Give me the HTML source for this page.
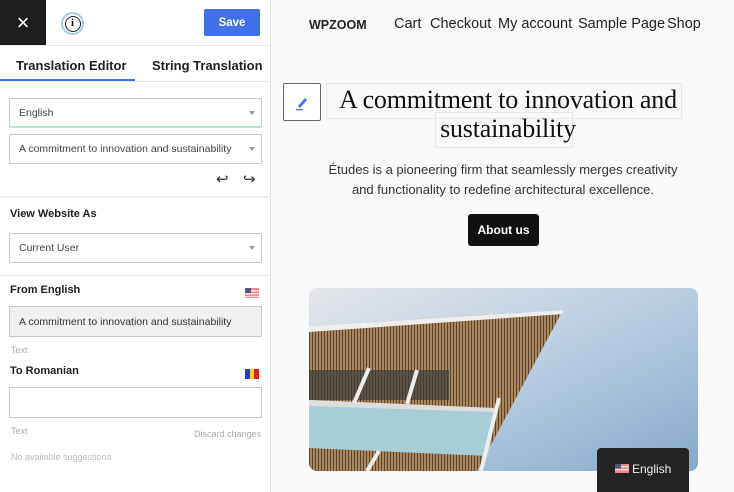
<!DOCTYPE html>
<html><head><meta charset="utf-8"><style>
*{box-sizing:border-box;margin:0;padding:0}
body{width:734px;height:492px;overflow:hidden;font-family:"Liberation Sans",Arial,sans-serif;background:#f9f9f9;position:relative}
#left{position:absolute;left:0;top:0;width:271px;height:492px;background:#fff;border-right:1px solid #e2e2e2}
.abs{position:absolute}
.sel{position:absolute;left:9px;width:253px;border:1px solid #c8c8c8;border-radius:2px;font-size:10.5px;color:#444;padding-left:9px;background:#fff}
.arr{position:absolute;right:6px;top:50%;margin-top:-2px;border-left:3px solid transparent;border-right:3px solid transparent;border-top:4px solid #999}
.lbl{position:absolute;left:10px;font-size:11px;font-weight:bold;color:#1e1e1e}
.small{position:absolute;font-size:9px;color:#aaa}
#right{position:absolute;left:272px;top:0;width:462px;height:492px}
.nav{position:absolute;top:16px;font-family:"Liberation Sans",sans-serif;font-size:14.5px;color:#222}
</style></head><body>
<div id="left">
 <div class="abs" style="left:0;top:0;width:46px;height:45px;background:#1e1e1e;color:#fff;font-size:22px;text-align:center;line-height:45px">×</div>
 <div class="abs" style="left:61px;top:12px;width:23px;height:23px;border-radius:50%;border:2px solid #a8c8f0;"><div style="position:absolute;left:1.5px;top:1.5px;width:16px;height:16px;border:1.5px solid #222;border-radius:50%;font-size:11px;font-weight:bold;text-align:center;line-height:13px;font-family:'Liberation Serif',serif">i</div></div>
 <div class="abs" style="left:204px;top:9px;width:56px;height:27px;background:#3f72e8;color:#fff;font-size:11.5px;font-weight:bold;text-align:center;line-height:28px;border-radius:2px">Save</div>
 <div class="abs" style="left:0;top:45px;width:271px;height:1px;background:#e6e6e6"></div>
 <div class="abs" style="left:16px;top:58px;font-size:13px;font-weight:bold;color:#1e1e1e">Translation Editor</div>
 <div class="abs" style="left:152px;top:58px;font-size:13px;font-weight:bold;color:#1e1e1e">String Translation</div>
 <div class="abs" style="left:0;top:79px;width:135px;height:3px;background:#3f72e8"></div>
 <div class="abs" style="left:0;top:81px;width:271px;height:1px;background:#e6e6e6"></div>
 <div class="sel" style="top:98px;height:30px;line-height:29px;border-bottom:2px solid #b8e8c4">English<span class="arr"></span></div>
 <div class="sel" style="top:134px;height:30px;line-height:29px">A commitment to innovation and sustainability<span class="arr"></span></div>
 <div class="abs" style="left:216px;top:170px;font-size:15px;color:#333">↩</div>
 <div class="abs" style="left:243px;top:170px;font-size:15px;color:#333">↪</div>
 <div class="abs" style="left:0;top:196px;width:271px;height:2px;background:#eee"></div>
 <div class="lbl" style="top:208px">View Website As</div>
 <div class="sel" style="top:233px;height:30px;line-height:29px">Current User<span class="arr"></span></div>
 <div class="abs" style="left:0;top:275px;width:271px;height:1px;background:#e2e2e2"></div>
 <div class="lbl" style="top:284px">From English</div>
 <svg class="abs" style="left:245px;top:288px" width="14" height="10"><rect width="14" height="10" fill="#e88"/><rect y="2" width="14" height="1.5" fill="#fdd"/><rect y="5" width="14" height="1.5" fill="#fdd"/><rect y="8" width="14" height="1.2" fill="#fdd"/><rect width="6" height="5" fill="#557"/></svg>
 <div class="abs" style="left:9px;top:306px;width:253px;height:31px;border:1px solid #c8c8c8;background:#f0f0f0;font-size:10.5px;color:#333;padding-left:9px;line-height:30px">A commitment to innovation and sustainability</div>
 <div class="small" style="left:11px;top:345px">Text</div>
 <div class="lbl" style="top:365px">To Romanian</div>
 <svg class="abs" style="left:245px;top:369px" width="14" height="10"><rect width="5" height="10" fill="#1b3fd8"/><rect x="5" width="4" height="10" fill="#f7d618"/><rect x="9" width="5" height="10" fill="#e0201b"/></svg>
 <div class="abs" style="left:9px;top:387px;width:253px;height:31px;border:1px solid #c8c8c8;background:#fff"></div>
 <div class="small" style="left:11px;top:426px">Text</div>
 <div class="small" style="left:194px;top:429px">Discard changes</div>
 <div class="small" style="left:11px;top:452px;color:#bbb">No available suggestions</div>
</div>
<div id="right">
 <div class="nav" style="left:37px;font-size:12.5px;font-weight:bold;top:18px">WPZOOM</div>
 <div class="nav" style="left:122px">Cart</div>
 <div class="nav" style="left:158px">Checkout</div>
 <div class="nav" style="left:226px">My account</div>
 <div class="nav" style="left:306px">Sample Page</div>
 <div class="nav" style="left:395px">Shop</div>
 <div class="abs" style="left:11px;top:83px;width:38px;height:38px;border:1px solid #666;border-radius:2px;background:#fff">
  <svg width="36" height="36"><path d="M14 22 L21 14 L23 16 L16 24 Z" fill="#3f72e8"/><rect x="12" y="25" width="7" height="1.3" fill="#3f72e8"/></svg></div>
 <div class="abs" style="left:54px;top:83px;width:356px;height:36px;border:1px solid #e6e6e6"></div>
 <div class="abs" style="left:163px;top:112px;width:138px;height:36px;border:1px solid #e6e6e6"></div>
 <div class="abs" style="left:40px;top:85px;width:392px;text-align:center;font-family:'Liberation Serif',serif;font-size:26px;line-height:29px;color:#111;letter-spacing:-0.2px">A commitment to innovation and sustainability</div>
 <div class="abs" style="left:21px;top:160px;width:420px;text-align:center;font-family:'Liberation Sans',sans-serif;font-size:13px;line-height:20px;color:#333">Études is a pioneering firm that seamlessly merges creativity<br>and functionality to redefine architectural excellence.</div>
 <div class="abs" style="left:196px;top:214px;width:71px;height:32px;background:#111;border-radius:3px;color:#fff;font-size:12px;font-weight:bold;text-align:center;line-height:32px">About us</div>
 <svg class="abs" style="left:37px;top:288px" width="389" height="183">
  <defs><linearGradient id="s" x1="0" y1="0" x2="1" y2="1"><stop offset="0" stop-color="#e4e6ea"/><stop offset=".5" stop-color="#b9cde0"/><stop offset="1" stop-color="#86a9cb"/></linearGradient>
  <pattern id="st" width="3" height="10" patternUnits="userSpaceOnUse"><rect width="3" height="10" fill="#a8865e"/><rect width="1" height="10" fill="#5a4430"/></pattern>
  <clipPath id="c"><rect width="389" height="183" rx="8"/></clipPath></defs>
  <g clip-path="url(#c)">
   <rect width="389" height="183" fill="url(#s)"/>
   <polygon points="0,38 254,22 168,183 0,183" fill="url(#st)"/>
   <polygon points="0,38 254,22 254,26 0,44" fill="#eee"/>
   <rect x="0" y="82" width="140" height="30" fill="#3a3a3a" opacity=".7"/>
   <polygon points="0,112 185,120 180,168 0,160" fill="#a9cdd6"/>
   <polygon points="0,112 185,120 185,124 0,118" fill="#ddd"/>
   <line x1="60" y1="80" x2="45" y2="115" stroke="#eee" stroke-width="4"/>
   <line x1="108" y1="82" x2="98" y2="116" stroke="#eee" stroke-width="4"/>
   <line x1="190" y1="110" x2="172" y2="183" stroke="#eee" stroke-width="4"/>
   <line x1="70" y1="163" x2="58" y2="183" stroke="#eee" stroke-width="4"/>
  </g>
 </svg>
 <div class="abs" style="left:325px;top:448px;width:92px;height:44px;background:#232323;border-radius:4px 4px 0 0;color:#eee;font-size:12px;line-height:42px;padding-left:35px">English</div>
 <svg class="abs" style="left:343px;top:464px" width="14" height="9"><rect width="14" height="9" fill="#e88"/><rect y="2" width="14" height="1.3" fill="#fdd"/><rect y="5" width="14" height="1.3" fill="#fdd"/><rect width="6" height="4.5" fill="#557"/></svg>
</div>
</body></html>
